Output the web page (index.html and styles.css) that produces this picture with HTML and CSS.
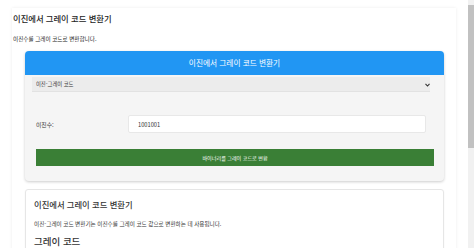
FILE: index.html
```html
<!DOCTYPE html>
<html lang="ko">
<head>
    <meta charset="UTF-8">
    <meta name="viewport" content="width=device-width, initial-scale=1.0">
    <title>이진에서 그레이 코드 변환기</title>
    <link rel="stylesheet" href="styles.css">
</head>
<body>
    <div class="page">
        <h1 class="page-title">이진에서 그레이 코드 변환기</h1>
        <p class="page-lead">이진수를 그레이 코드로 변환합니다.</p>

        <!-- converter card -->
        <div class="tool-card">
            <div class="tool-head">이진에서 그레이 코드 변환기</div>
            <div class="tool-body">
                <div class="select-wrap">
                    <select class="mode-select">
                        <option>이진-그레이 코드</option>
                        <option>그레이 코드-이진</option>
                    </select>
                    <svg class="select-arrow" width="5" height="4" viewBox="0 0 5 4">
                        <path d="M0.5 0.8 L2.5 3 L4.5 0.8" fill="none" stroke="#333" stroke-width="1.1"/>
                    </svg>
                </div>
                <div class="field-row">
                    <label class="field-label" for="bin">이진수:</label>
                    <input class="field-input" type="text" id="bin" value="1001001">
                </div>
                <button class="convert-btn">바이너리를 그레이 코드로 변환</button>
            </div>
        </div>

        <!-- info card -->
        <div class="info-card">
            <h2 class="info-title">이진에서 그레이 코드 변환기</h2>
            <p class="info-text">이진-그레이 코드 변환기는 이진수를 그레이 코드 값으로 변환하는 데 사용됩니다.</p>
            <h3 class="info-sub">그레이 코드</h3>
            <p class="info-text">그레이 코드는 연속된 두 값이 한 비트만 다르도록 배열된 이진 숫자 체계입니다.</p>
            <h3 class="info-sub">변환 방법</h3>
            <p class="info-text">최상위 비트는 그대로 두고, 나머지 비트는 이전 비트와 XOR 연산을 합니다.</p>
            <p class="info-text">예: 1001001 → 1101101</p>
        </div>
    </div>

    <!-- scrollbar of the captured window -->
    <div class="fake-scroll"><div class="fake-thumb"></div></div>
</body>
</html>
```

FILE: styles.css
```css
/* page */
body {
    margin: 0;
    background-color: #fff;
    font-family: "Noto Sans CJK KR", "Noto Sans", sans-serif;
    color: #333;
}

.page {
    margin: 8px 18px 0 12px;
    padding: 2px 0 24px 1px;
    background-color: #fff;
    box-shadow: 0 0 3px rgba(0, 0, 0, 0.08);
}
.page-title {
    margin: 0;
    font-size: 8.3px;
    line-height: 16px;
    font-weight: 500;
    color: #222;
}
.page-lead {
    margin: 8px 0 0;
    font-size: 5.6px;
    line-height: 10px;
    color: #222;
}

/* converter card */
.tool-card {
    margin: 7px 12px 0;
    border-radius: 4px;
    background-color: #f5f5f5;
    box-shadow: 0 1px 3px rgba(0, 0, 0, 0.2);
    padding-bottom: 15px;
}
.tool-head {
    height: 24px;
    line-height: 24px;
    border-radius: 4px 4px 0 0;
    background-color: #2196f3;
    color: #fff;
    font-size: 7.7px;
    text-align: center;
}
.tool-body {
    padding-top: 2px;
}
.select-wrap {
    position: relative;
    margin-left: 7px;
    width: 398px;
}
.mode-select {
    appearance: none;
    display: block;
    width: 100%;
    height: 15px;
    margin: 0;
    padding: 0 0 0 4px;
    border: none;
    border-bottom: 1px solid #e2e2e2;
    background-color: #ececec;
    font-family: inherit;
    font-size: 5.3px;
    color: #333;
}
.select-arrow {
    position: absolute;
    right: 0;
    top: 6px;
}
.field-row {
    display: flex;
    align-items: center;
    margin-top: 23px;
    padding-left: 11px;
}
.field-label {
    width: 92px;
    font-size: 5.8px;
}
.field-input {
    box-sizing: border-box;
    width: 298px;
    height: 18px;
    margin: 0;
    padding: 0 9px;
    border: 1px solid #e8e8e8;
    border-radius: 2px;
    background-color: #fff;
    font-family: inherit;
    font-size: 5.7px;
    color: #333;
}
.convert-btn {
    display: block;
    width: 398px;
    height: 17px;
    margin: 16px 0 0 11px;
    padding: 0;
    border: none;
    background-color: #3a7f36;
    color: #fff;
    font-family: inherit;
    font-size: 5.1px;
    cursor: pointer;
}

/* info card */
.info-card {
    margin: 8px 12px 0;
    padding: 7px 8px 12px;
    border: 1px solid #e6e6e6;
    border-radius: 3px;
    box-shadow: 0 1px 2px rgba(0, 0, 0, 0.06);
}
.info-title {
    margin: 0;
    font-size: 8.3px;
    line-height: 14px;
    font-weight: 500;
}
.info-text {
    margin: 8px 0 0;
    font-size: 5.6px;
    line-height: 10px;
}
.info-sub {
    margin: 5px 0 0;
    font-size: 9.5px;
    line-height: 14px;
    font-weight: 500;
}

/* window scrollbar */
.fake-scroll {
    position: fixed;
    top: 0;
    right: 0;
    bottom: 0;
    width: 6px;
    background-color: #f1f1f1;
}
.fake-thumb {
    margin-top: 5px;
    height: 143px;
    background-color: #c1c1c1;
}
```
